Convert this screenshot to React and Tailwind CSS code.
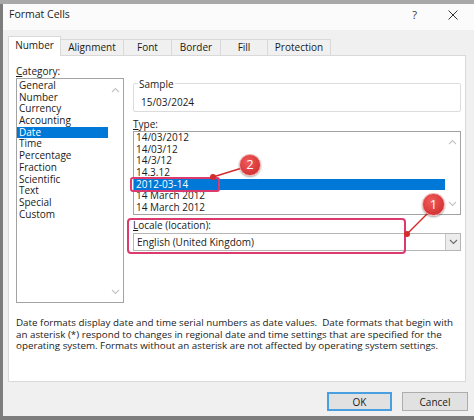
import React from "react";

const categories = [
	"General",
	"Number",
	"Currency",
	"Accounting",
	"Date",
	"Time",
	"Percentage",
	"Fraction",
	"Scientific",
	"Text",
	"Special",
	"Custom",
];

const dateTypes = [
	"14/03/2012",
	"14/03/12",
	"14/3/12",
	"14.3.12",
	"2012-03-14",
	"14 March 2012",
	"14 March 2012",
];

const tabs = [
	{ label: "Number", w: "w-[53px]", active: true },
	{ label: "Alignment", w: "w-[63px]" },
	{ label: "Font", w: "w-[48px]" },
	{ label: "Border", w: "w-[49px]" },
	{ label: "Fill", w: "w-[47px]" },
	{ label: "Protection", w: "w-[63px]" },
];

function Chevron({ up = false, className = "" }) {
	return (
		<svg width="9" height="6" viewBox="0 0 9 6" className={className}>
			<polyline
				points={up ? "1,5 4.5,1.5 8,5" : "1,1 4.5,4.5 8,1"}
				fill="none"
				stroke="currentColor"
				strokeWidth="1.1"
			/>
		</svg>
	);
}

// listbox with a fake vertical scrollbar
function ListBox({ items, selected, className }) {
	return (
		<div className={`flex border border-[#a3a3a3] bg-white ${className}`}>
			<div className="flex-1 flex flex-col">
				{items.map((item, i) => (
					<div
						key={i}
						className={`h-[11.7px] leading-[11.7px] pl-[2px] whitespace-nowrap ${
							i === selected ? "bg-[#0078d7] text-white" : "text-[#1a1a1a]"
						}`}
					>
						{item}
					</div>
				))}
			</div>
			<div className="w-[15px] flex flex-col items-center justify-between py-[7px] text-[#c4c4c4]">
				<Chevron up />
				<Chevron />
			</div>
		</div>
	);
}

function Badge({ n, className }) {
	return (
		<div
			className={`absolute flex items-center justify-center rounded-full border-[1.5px] border-[#f2a7a7] bg-[radial-gradient(circle_at_40%_35%,#f25b5b,#c82525)] text-white text-[13px] shadow-[0_1px_2px_rgba(0,0,0,0.35)] ${className}`}
		>
			{n}
		</div>
	);
}

export default function App() {
	return (
		<div className="relative w-[474px] h-[420px] overflow-hidden bg-[#7d7d7d] font-['Open_Sans','Noto_Sans',sans-serif] text-[10px] text-[#1a1a1a]">
			<div className="h-[4px] bg-[#a8a8a8]" />
			<div className="ml-[3px] h-[412px] flex flex-col bg-[#f0f0f0]">
				{/* title bar */}
				<div className="h-[26px] shrink-0 flex items-center bg-[#fbfbfb] pl-[6px] pr-[16px] pb-[4px]">
					<span className="text-[10.5px] text-[#222]">Format Cells</span>
					<span className="ml-auto text-[11px] text-[#333]">?</span>
					<svg width="10" height="10" viewBox="0 0 10 10" className="ml-[31px]">
						<path d="M0.5 0.5L9.5 9.5M9.5 0.5L0.5 9.5" stroke="#333" strokeWidth="1" />
					</svg>
				</div>

				{/* tabs */}
				<div className="pl-[5px] pt-[5px] flex items-end h-[25px] shrink-0">
					{tabs.map((t) => (
						<div
							key={t.label}
							className={`${t.w} flex items-center justify-center border-[#d9d9d9] border-t border-r ${
								t.active
									? "h-[20px] bg-white border-l relative z-10 -mb-px"
									: "h-[16px] bg-[#f0f0f0]"
							}`}
						>
							<span className={t.active ? "mt-[-2px]" : "mt-[-1px]"}>{t.label}</span>
						</div>
					))}
				</div>

				{/* tab panel */}
				<div className="ml-[5px] w-[458px] h-[327px] shrink-0 border border-[#d9d9d9] bg-white">
					<div className="flex">
						<div className="ml-[7px] w-[108px] pt-[9px]">
							<div className="h-[13px] leading-[13px]">
								<span className="underline">C</span>ategory:
							</div>
							<ListBox items={categories} selected={4} className="h-[225px] pt-px" />
						</div>

						<div className="ml-[9px] w-[328px] pt-[27px]">
							<div className="relative h-[29px] border border-[#dcdcdc] rounded-[2px]">
								<span className="absolute left-[4px] top-[-6px] bg-white px-[1px] leading-[13px]">
									Sample
								</span>
								<div className="pl-[7px] pt-[12px] leading-[13px]">15/03/2024</div>
							</div>
							<div className="mt-[6px] h-[13px] leading-[13px]">
								<span className="underline">T</span>ype:
							</div>
							<ListBox items={dateTypes} selected={4} className="h-[84px]" />
							<div className="mt-[4px] h-[13px] leading-[13px]">
								<span className="underline">L</span>ocale (location):
							</div>
							<div className="mt-px h-[18px] flex border border-[#b5b5b5] bg-white">
								<div className="flex-1 pl-[3px] leading-[16px]">English (United Kingdom)</div>
								<div className="w-[15px] flex items-center justify-center border-l border-[#c9c9c9] bg-[#ececec] text-[#6a6a6a]">
									<Chevron />
								</div>
							</div>
						</div>
					</div>

					<p className="mt-[14px] ml-[7px] text-[9.8px] leading-[11.5px] whitespace-pre">
						{"Date formats display date and time serial numbers as date values.  Date formats that begin with\nan asterisk (*) respond to changes in regional date and time settings that are specified for the\noperating system. Formats without an asterisk are not affected by operating system settings."}
					</p>
				</div>

				{/* buttons */}
				<div className="mt-[10px] flex justify-end gap-[10px] pr-[6px]">
					<button className="w-[65px] h-[19px] border-2 border-[#4a9fe0] bg-[#e1e1e1] leading-none">
						OK
					</button>
					<button className="w-[66px] h-[19px] border border-[#adadad] bg-[#e1e1e1] leading-none">
						Cancel
					</button>
				</div>
			</div>

			{/* annotations */}
			<div className="absolute left-[127px] top-[218px] w-[279px] h-[36px] rounded-[4px] border-[2.5px] border-[#dc3a6c]" />
			<div className="absolute left-[130px] top-[177px] w-[90px] h-[15px] rounded-[3px] border-[2.5px] border-[#dc3a6c]" />
			<svg width="474" height="420" className="absolute left-0 top-0 pointer-events-none">
				<line x1="213" y1="177" x2="242" y2="168" stroke="#d42c2c" strokeWidth="1.5" />
				<circle cx="213" cy="177" r="3" fill="#d42c2c" />
				<line x1="407" y1="234" x2="428" y2="213" stroke="#d42c2c" strokeWidth="1.5" />
				<circle cx="407" cy="234" r="3" fill="#d42c2c" />
			</svg>
			<Badge n="2" className="left-[239px] top-[154px] w-[22px] h-[22px]" />
			<Badge n="1" className="left-[422px] top-[193px] w-[23px] h-[23px]" />
		</div>
	);
}
